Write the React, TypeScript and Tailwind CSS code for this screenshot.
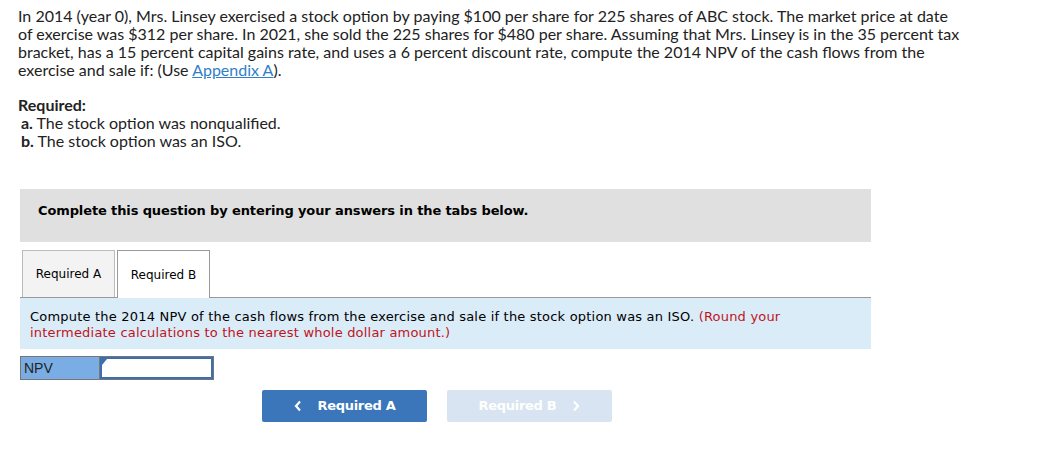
import React from "react";

export default function App() {
  return (
    <div className="w-[1039px] h-[455px] bg-white relative overflow-hidden">
      <div className="pl-[18px] pt-[7px] w-[1000px] text-[16px] leading-[18px] text-[#222] font-['Lato',sans-serif] whitespace-nowrap">
        <p>
          In 2014 (year 0), Mrs. Linsey exercised a stock option by paying $100 per share for 225 shares of ABC stock. The market price at date<br />
          of exercise was $312 per share. In 2021, she sold the 225 shares for $480 per share. Assuming that Mrs. Linsey is in the 35 percent tax<br />
          bracket, has a 15 percent capital gains rate, and uses a 6 percent discount rate, compute the 2014 NPV of the cash flows from the<br />
          exercise and sale if: (Use{" "}
          <span className="text-[#2f7fc9] underline">Appendix A</span>).
        </p>
        <p className="mt-[17px] font-bold">Required:</p>
        <p className="pl-[3px]"><span className="font-bold">a.</span> The stock option was nonqualified.</p>
        <p className="pl-[3px]"><span className="font-bold">b.</span> The stock option was an ISO.</p>
      </div>

      <div className="ml-[20px] mt-[39px] w-[851px] h-[53px] bg-[#e0e0e0] pl-[18px] pt-[14px] font-['DejaVu_Sans',Verdana,sans-serif] text-[13px] leading-[16px] tracking-[-0.12px] font-bold text-black">
        Complete this question by entering your answers in the tabs below.
      </div>

      <div className="ml-[20px] mt-[8px] w-[851px] font-['DejaVu_Sans',Verdana,sans-serif]">
        <div className="flex items-end h-[48px] border-b border-[#999]">
          <div className="ml-[2px] w-[93px] h-[47px] bg-[#f3f3f3] border border-b-0 border-[#bbb] flex items-center justify-center text-[12px] text-black">
            Required A
          </div>
          <div className="ml-[2px] w-[93px] h-[48px] -mb-px bg-white border border-b-0 border-[#999] flex items-center justify-center text-[12px] text-black">
            Required B
          </div>
        </div>
        <div className="h-[51px] bg-[#dbecf9] px-[10px] pt-[11px] text-[13px] leading-[16px] tracking-[0.2px] text-black">
          Compute the 2014 NPV of the cash flows from the exercise and sale if the stock option was an ISO.{" "}
          <span className="text-[#c0141b]">(Round your intermediate calculations to the nearest whole dollar amount.)</span>
        </div>
      </div>

      <div className="ml-[20px] mt-[7px] flex w-[194px] h-[24px] border border-[#777] font-['Liberation_Sans',Arial,sans-serif] text-[14px]">
        <div className="w-[79px] bg-[#7aade3] flex items-center pl-[3px] text-[#222] border-r border-[#777]">NPV</div>
        <div className="flex-1 bg-white border-2 border-[#3b6fb0] relative">
          <div className="absolute left-0 top-0 w-0 h-0 border-t-[6px] border-t-[#3b6fb0] border-r-[5px] border-r-transparent" />
        </div>
      </div>

      <div className="ml-[262px] mt-[10px] flex gap-[20px] font-['DejaVu_Sans',Verdana,sans-serif] text-[13px] tracking-[-0.3px] font-bold">
        <div className="w-[165px] h-[32px] rounded-[2px] bg-[#3a76b9] text-white flex items-center justify-center gap-[16px]">
          <svg width="8" height="12" viewBox="0 0 8 12"><path d="M6 1.5 L2 6 L6 10.5" stroke="white" strokeWidth="2.2" fill="none" /></svg>
          <span>Required A</span>
        </div>
        <div className="w-[165px] h-[32px] rounded-[2px] bg-[#d8e4f1] text-white flex items-center justify-center gap-[16px]">
          <span>Required B</span>
          <svg width="8" height="12" viewBox="0 0 8 12"><path d="M2 1.5 L6 6 L2 10.5" stroke="white" strokeWidth="2.2" fill="none" /></svg>
        </div>
      </div>
    </div>
  );
}
